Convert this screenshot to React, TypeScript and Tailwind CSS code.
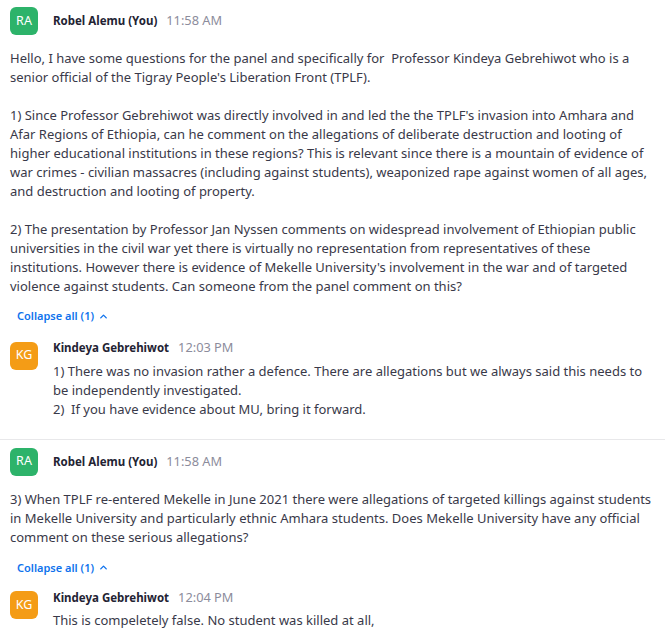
import { ChevronUp } from "lucide-react";

const font = { fontFamily: '"Noto Sans", "Open Sans", sans-serif' };

type Msg = { initials: string; color: string; name: string; time: string };

const Avatar = ({ initials, color }: { initials: string; color: string }) => (
  <div className={`w-7 h-7 rounded-md flex items-center justify-center text-white text-[12.5px] shrink-0 ${color}`}>
    {initials}
  </div>
);

const Header = ({ initials, color, name, time }: Msg) => (
  <div className="flex items-center">
    <Avatar initials={initials} color={color} />
    <span className="ml-[15px] text-[11.5px] font-bold text-[#232333]">{name}</span>
    <span className="ml-[9px] text-[12.8px] text-[#8c8c9c]">{time}</span>
  </div>
);

const Lines = ({ lines }: { lines: string[] }) => (
  <div className="text-[13px] leading-[19px] text-[#393949] whitespace-pre">
    {lines.map((l, i) => (
      <div key={i} className="h-[19px]">{l}</div>
    ))}
  </div>
);

const Collapse = () => (
  <button className="flex items-center gap-1 ml-[7px] text-[11px] font-semibold text-[#0e72ed]">
    Collapse all (1)
    <ChevronUp size={11} strokeWidth={3} />
  </button>
);

const Reply = ({ time, lines }: { time: string; lines: string[] }) => (
  <div className="flex">
    <div className="pt-[3px]">
      <Avatar initials="KG" color="bg-[#f49c16]" />
    </div>
    <div className="ml-[15px]">
      <div className="flex items-center h-[19px]">
        <span className="text-[11.5px] font-bold text-[#232333]">Kindeya Gebrehiwot</span>
        <span className="ml-[9px] text-[12.8px] text-[#8c8c9c]">{time}</span>
      </div>
      <div className="mt-[4px]">
        <Lines lines={lines} />
      </div>
    </div>
  </div>
);

export default function App() {
  return (
    <div className="w-[665px] h-[638px] bg-white overflow-hidden" style={font}>
      <div className="px-[10px] pt-[7px]">
        <Header initials="RA" color="bg-[#2db36a]" name="Robel Alemu (You)" time="11:58 AM" />
        <div className="mt-[14px]">
          <Lines
            lines={[
              "Hello, I have some questions for the panel and specifically for  Professor Kindeya Gebrehiwot who is a",
              "senior official of the Tigray People's Liberation Front (TPLF).",
              "",
              "1) Since Professor Gebrehiwot was directly involved in and led the the TPLF's invasion into Amhara and",
              "Afar Regions of Ethiopia, can he comment on the allegations of deliberate destruction and looting of",
              "higher educational institutions in these regions? This is relevant since there is a mountain of evidence of",
              "war crimes - civilian massacres (including against students), weaponized rape against women of all ages,",
              "and destruction and looting of property.",
              "",
              "2) The presentation by Professor Jan Nyssen comments on widespread involvement of Ethiopian public",
              "universities in the civil war yet there is virtually no representation from representatives of these",
              "institutions. However there is evidence of Mekelle University's involvement in the war and of targeted",
              "violence against students. Can someone from the panel comment on this?",
            ]}
          />
        </div>
        <div className="mt-[12px]">
          <Collapse />
        </div>
        <div className="mt-[14px]">
          <Reply
            time="12:03 PM"
            lines={[
              "1) There was no invasion rather a defence. There are allegations but we always said this needs to",
              "be independently investigated.",
              "2)  If you have evidence about MU, bring it forward.",
            ]}
          />
        </div>
      </div>
      <div className="mt-[20px] border-t border-[#e8e8ea]" />
      <div className="px-[10px] pt-[8px]">
        <Header initials="RA" color="bg-[#2db36a]" name="Robel Alemu (You)" time="11:58 AM" />
        <div className="mt-[14px]">
          <Lines
            lines={[
              "3) When TPLF re-entered Mekelle in June 2021 there were allegations of targeted killings against students",
              "in Mekelle University and particularly ethnic Amhara students. Does Mekelle University have any official",
              "comment on these serious allegations?",
            ]}
          />
        </div>
        <div className="mt-[13px]">
          <Collapse />
        </div>
        <div className="mt-[12px]">
          <Reply time="12:04 PM" lines={["This is compeletely false. No student was killed at all,"]} />
        </div>
      </div>
    </div>
  );
}
